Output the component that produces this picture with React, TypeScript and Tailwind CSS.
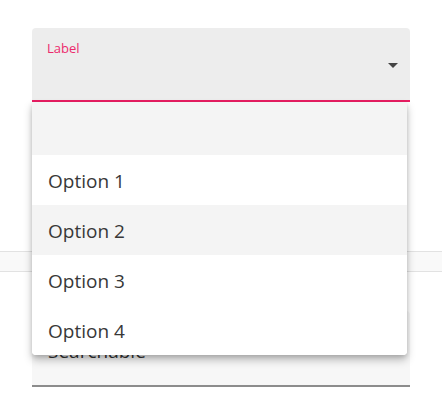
import React from "react";

const options = ["", "Option 1", "Option 2", "Option 3", "Option 4"];

export default function App() {
    return (
        <div
            className="relative h-[417px] w-[442px] overflow-hidden bg-white text-[#333]"
            style={{ fontFamily: '"Segoe UI", "Open Sans", "Noto Sans", sans-serif' }}
        >
            {/* Select field */}
            <div className="px-8 pt-[28px]">
                <div className="relative h-[74px] rounded-t-[4px] border-b-2 border-[#e91e63] bg-[#ededed]">
                    <span className="absolute left-[15px] top-[14px] text-[13px] leading-none text-[#ec2a6c]">
                        Label
                    </span>
                    <svg
                        className="absolute right-[12px] top-[35px]"
                        width="10"
                        height="5"
                        viewBox="0 0 10 5"
                    >
                        <path d="M0 0h10L5 5z" fill="#444" />
                    </svg>
                </div>
            </div>

            {/* Divider band */}
            <div className="mt-[149px] h-[21px] border-y border-[#e2e2e2] bg-[#f9f9f9]" />

            {/* Second field */}
            <div className="mt-[39px] px-8">
                <div className="flex h-[76px] items-end rounded-t-[4px] border-b-2 border-[#8c8c8c] bg-[#f7f7f7] px-4 pb-[24px]">
                    <span className="text-[19px] leading-none text-[#333]">Searchable</span>
                </div>
            </div>

            {/* Open menu */}
            <div className="absolute left-8 top-[102px] w-[375px] overflow-hidden rounded-b-[4px] bg-white shadow-[0_5px_8px_rgba(0,0,0,0.25),0_2px_4px_rgba(0,0,0,0.12)]">
                {options.map((opt, i) => (
                    <div
                        key={i}
                        className={`flex items-center px-4 pt-[2px] text-[19px] text-[#383838] ${
                            i === 0 ? "h-[53px]" : "h-[50px]"
                        } ${i === 0 || i === 2 ? "bg-[#f4f4f4]" : "bg-white"}`}
                    >
                        {opt}
                    </div>
                ))}
            </div>
        </div>
    );
}
